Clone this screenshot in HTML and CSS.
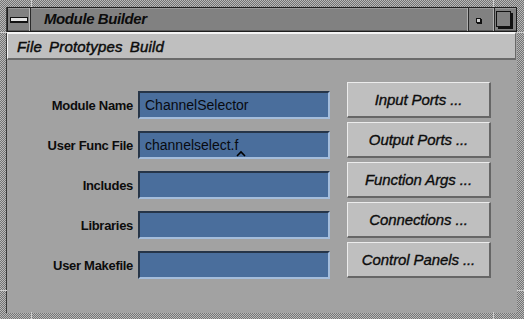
FILE: index.html
```html
<!DOCTYPE html>
<html>
<head>
<meta charset="utf-8">
<link rel="stylesheet" href="styles.css">
</head>
<body>
<div class="frame">
  <span class="notch nv" style="left:31px;top:0"></span>
  <span class="notch nv" style="left:493px;top:0"></span>
  <span class="notch nv" style="left:31px;bottom:0"></span>
  <span class="notch nv" style="left:493px;bottom:0"></span>
  <span class="notch nh" style="left:0;top:32px"></span>
  <span class="notch nh" style="right:0;top:32px"></span>
  <span class="notch nh" style="left:0;top:290px"></span>
  <span class="notch nh" style="right:0;top:290px"></span>
  <div class="win">
    <div class="titlebar">
      <div class="tb-btn menu-btn"><span class="bar"></span></div>
      <div class="title">Module Builder</div>
      <div class="tb-btn min-btn"><span class="dot"></span></div>
      <div class="tb-btn max-btn"><span class="sq"></span></div>
    </div>
    <div class="menubar">
      <span class="mi">File</span>
      <span class="mi">Prototypes</span>
      <span class="mi">Build</span>
    </div>
    <div class="content">
      <div class="form">
        <div class="label">Module Name</div>
        <div class="field">ChannelSelector</div>
        <div class="label">User Func File</div>
        <div class="field">channelselect.f<svg class="caret" width="10" height="7" viewBox="0 0 10 7"><path d="M1 6 L5 2 L9 6" fill="none" stroke="#000" stroke-width="1.6"/></svg></div>
        <div class="label">Includes</div>
        <div class="field"></div>
        <div class="label">Libraries</div>
        <div class="field"></div>
        <div class="label">User Makefile</div>
        <div class="field"></div>
      </div>
      <div class="buttons">
        <div class="btn">Input Ports ...</div>
        <div class="btn">Output Ports ...</div>
        <div class="btn">Function Args ...</div>
        <div class="btn">Connections ...</div>
        <div class="btn">Control Panels ...</div>
      </div>
    </div>
  </div>
</div>
</body>
</html>
```
FILE: styles.css
```css
html, body {
  margin: 0;
  padding: 0;
  background: #a0a0a0;
}
body {
  width: 524px;
  height: 319px;
  overflow: hidden;
  font-family: "Liberation Sans", Arial, sans-serif;
}
.frame {
  position: relative;
  width: 524px;
  height: 319px;
  box-sizing: border-box;
  padding: 7px 7px 6px 7px;
  background-color: #8c8c8c;
  background-image: repeating-conic-gradient(#747474 0 25%, #b8b8b8 0 50%);
  background-size: 2px 2px;
}
.notch {
  position: absolute;
  background: #cfcfcf;
}
.nv { width: 1px; height: 7px; }
.nh { width: 7px; height: 1px; }
.win {
  width: 510px;
  height: 306px;
  display: flex;
  flex-direction: column;
  background: #a2a2a2;
  box-shadow: -1px 0 0 #3a3a3a;
}
.titlebar {
  height: 25px;
  box-sizing: border-box;
  display: flex;
  align-items: stretch;
  background: #818181;
  border: 1px solid #1e1e1e;
  box-shadow: inset 0 1px 0 #9a9a9a, inset 0 -1px 0 #5a5a5a;
}
.tb-btn {
  display: flex;
  align-items: center;
  justify-content: center;
  box-sizing: border-box;
}
.menu-btn {
  width: 23px;
  border-right: 1px solid #2a2a2a;
  box-shadow: inset -1px 0 0 #b8b8b8;
}
.bar {
  width: 16px;
  height: 3px;
  background: #e4e4e4;
  border: 1px solid #111;
  border-bottom-width: 2px;
  margin-top: 1px;
}
.title {
  flex: 1;
  padding-left: 13px;
  font-size: 15px;
  font-style: italic;
  font-weight: bold;
  color: #0c0c0c;
  line-height: 22px;
  letter-spacing: -0.4px;
}
.min-btn {
  width: 26px;
  border-left: 1px solid #b0b0b0;
  box-shadow: inset 1px 0 0 #2a2a2a;
}
.dot {
  width: 3px;
  height: 3px;
  border: 1px solid #111;
  background: #d0d0d0;
  box-shadow: 1px 1px 0 #111;
  margin-right: 4px;
  margin-top: 2px;
}
.max-btn {
  width: 23px;
  border-left: 1px solid #b0b0b0;
  box-shadow: inset 1px 0 0 #2a2a2a;
}
.sq {
  width: 13px;
  height: 14px;
  border: 1px solid #111;
  box-shadow: 2px 2px 0 #111;
  margin-right: 3px;
  margin-top: -1px;
}
.menubar {
  height: 28px;
  box-sizing: border-box;
  display: flex;
  align-items: center;
  gap: 7px;
  padding-left: 9px;
  background: #bfbfbf;
  border-top: 2px solid #f4f4f4;
  border-left: 1px solid #f4f4f4;
  border-bottom: 2px solid #6a6a6a;
  border-right: 1px solid #6a6a6a;
  margin-right: 1px;
}
.mi {
  font-size: 15px;
  font-style: italic;
  color: #0c0c0c;
  letter-spacing: 0.2px;
  -webkit-text-stroke: 0.45px #0c0c0c;
}
.content {
  flex: 1;
  display: flex;
  align-items: flex-start;
  background: #a2a2a2;
}
.form {
  display: grid;
  grid-template-columns: 126px 192px;
  column-gap: 5px;
  row-gap: 12px;
  grid-auto-rows: 28px;
  padding-top: 31px;
}
.label {
  display: flex;
  align-items: center;
  justify-content: flex-end;
  font-size: 13px;
  font-weight: bold;
  letter-spacing: -0.3px;
  color: #0c0c0c;
  padding-top: 1px;
}
.field {
  position: relative;
  box-sizing: border-box;
  height: 28px;
  background: #4a6e9c;
  border-top: 2px solid #263548;
  border-left: 2px solid #263548;
  border-bottom: 2px solid #a5bddb;
  border-right: 2px solid #a5bddb;
  padding-left: 5px;
  font-size: 14px;
  line-height: 24px;
  color: #080a10;
}
.caret {
  position: absolute;
  left: 96px;
  top: 17px;
}
.buttons {
  display: flex;
  flex-direction: column;
  gap: 4px;
  margin-left: 17px;
  padding-top: 22px;
}
.btn {
  width: 144px;
  height: 36px;
  box-sizing: border-box;
  display: flex;
  align-items: center;
  justify-content: center;
  background: #bfbfbf;
  border-top: 1px solid #ececec;
  border-left: 1px solid #ececec;
  border-bottom: 2px solid #666;
  border-right: 2px solid #666;
  font-size: 15px;
  font-style: italic;
  color: #0c0c0c;
  letter-spacing: -0.1px;
  -webkit-text-stroke: 0.35px #0c0c0c;
}
```
